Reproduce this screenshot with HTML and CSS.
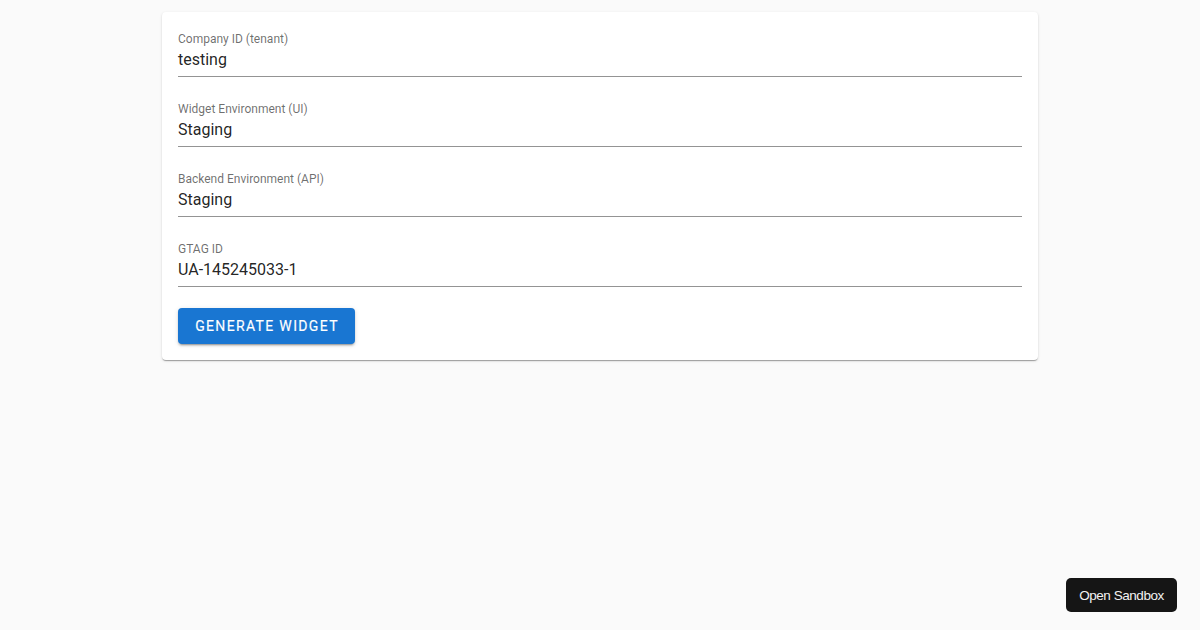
FILE: index.html
```html
<!DOCTYPE html>
<html lang="en">
<head>
<meta charset="utf-8">
<title>Widget Generator</title>
<link rel="stylesheet" href="styles.css">
</head>
<body>
<main class="page">
  <form class="card">
    <div class="field">
      <label class="field-label">Company ID (tenant)</label>
      <div class="field-input">testing</div>
    </div>
    <div class="field">
      <label class="field-label">Widget Environment (UI)</label>
      <div class="field-input">Staging</div>
    </div>
    <div class="field">
      <label class="field-label">Backend Environment (API)</label>
      <div class="field-input">Staging</div>
    </div>
    <div class="field">
      <label class="field-label">GTAG ID</label>
      <div class="field-input">UA-145245033-1</div>
    </div>
    <div class="actions">
      <button type="button" class="btn-primary">Generate Widget</button>
    </div>
  </form>
</main>
<button type="button" class="sandbox-btn">Open Sandbox</button>
</body>
</html>
```
FILE: styles.css
```css
html, body {
  margin: 0;
  padding: 0;
}
body {
  background: #fafafa;
  font-family: Roboto, "Helvetica Neue", Arial, sans-serif;
  width: 1200px;
  height: 630px;
  overflow: hidden;
}
.page {
  display: flex;
  justify-content: center;
  padding-top: 12px;
}
.card {
  width: 876px;
  box-sizing: border-box;
  background: #fff;
  border-radius: 4px;
  box-shadow: 0px 2px 1px -1px rgba(0,0,0,0.2), 0px 1px 1px 0px rgba(0,0,0,0.14), 0px 1px 3px 0px rgba(0,0,0,0.12);
  padding: 19px 16px 16px;
  display: flex;
  flex-direction: column;
  gap: 24px;
}
.field {
  display: flex;
  flex-direction: column;
}
.field-label {
  font-size: 12px;
  line-height: 16px;
  color: rgba(0,0,0,0.58);
}
.field-input {
  margin-top: 1px;
  font-size: 16px;
  line-height: 23px;
  color: rgba(0,0,0,0.87);
  padding-bottom: 5px;
  border-bottom: 1px solid rgba(0,0,0,0.42);
}
.actions {
  display: flex;
  margin-top: -3px;
}
.btn-primary {
  width: 177px;
  height: 36px;
  padding: 0 0 0 1px;
  border: none;
  border-radius: 4px;
  background: #1976d2;
  color: #fff;
  font-family: Roboto, sans-serif;
  font-weight: 400;
  font-size: 14px;
  letter-spacing: 1.35px;
  text-transform: uppercase;
  -webkit-text-stroke: 0.15px #fff;
  box-shadow: 0px 3px 1px -2px rgba(0,0,0,0.2), 0px 2px 2px 0px rgba(0,0,0,0.14), 0px 1px 5px 0px rgba(0,0,0,0.12);
}
.sandbox-btn {
  position: fixed;
  right: 23px;
  bottom: 18px;
  width: 111px;
  height: 34px;
  padding: 0;
  border: none;
  border-radius: 5px;
  background: #151515;
  color: #f2f2f2;
  font-family: "Liberation Sans", Arial, sans-serif;
  font-size: 13.5px;
  letter-spacing: -0.45px;
}
```
